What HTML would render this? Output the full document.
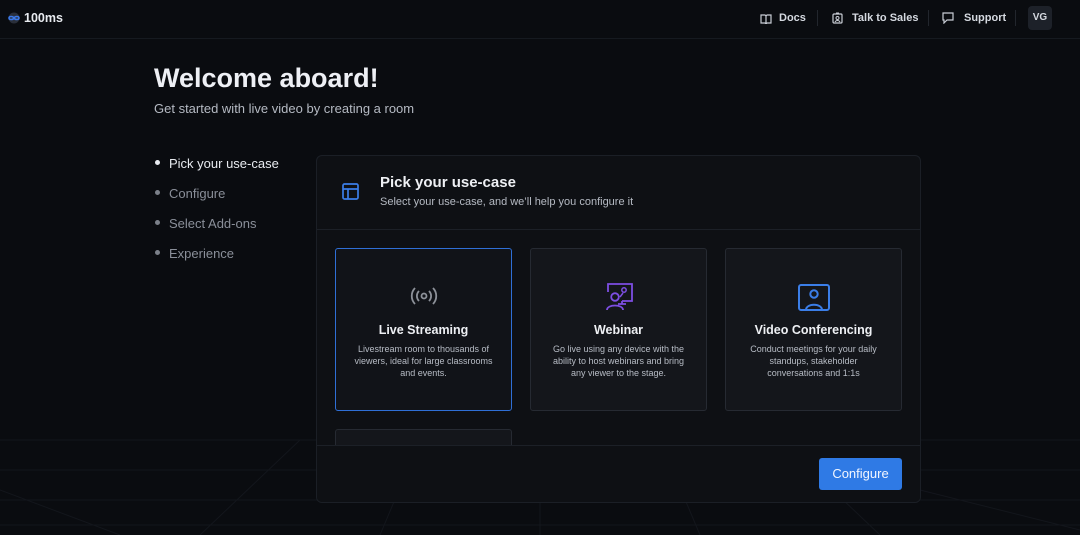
<!DOCTYPE html>
<html><head><meta charset="utf-8"><style>
*{margin:0;padding:0;box-sizing:border-box}
body{width:1080px;height:535px;overflow:hidden;background:#0a0c10;font-family:"Liberation Sans",sans-serif;color:#e6e9ef;position:relative}
.top{position:absolute;left:0;top:0;width:1080px;height:39px;border-bottom:1px solid #161a20}
.abs{position:absolute}
.nav{font-size:11px;font-weight:bold;color:#d5d9e0;display:flex;align-items:center;height:16px;line-height:16px}
.nav span{display:block;line-height:16px}
.sep{position:absolute;top:10px;width:1px;height:16px;background:#22262d}
.panel{position:absolute;left:316px;top:155px;width:605px;height:348px;background:#0e1014;border:1px solid #1b1f26;border-radius:6px;overflow:hidden}
.card{position:absolute;width:177px;height:163px;background:#14161b;border:1px solid #262a32;border-radius:3px;text-align:center}
.card h3{position:absolute;top:74px;width:100%;font-size:12.5px;color:#eef0f4}
.card p{position:absolute;top:94px;left:15px;right:15px;font-size:9px;line-height:12px;color:#b7bcc5}
.card svg{position:absolute;top:34px}
.step{position:absolute;left:155px;font-size:13px;color:#8a8f99}
.step:before{content:"";display:inline-block;width:5px;height:5px;border-radius:50%;background:#7c818a;margin-right:9px;vertical-align:middle;position:relative;top:-2px}
.step.on{color:#e8ebf0}.step.on:before{background:#e8ebf0}
</style></head><body>
<svg class="abs" style="left:0;top:290px" width="1080" height="245"><g stroke="#13161c" stroke-width="1" fill="none">
<line x1="0" y1="150" x2="1080" y2="150"/><line x1="0" y1="180" x2="1080" y2="180"/><line x1="0" y1="210" x2="1080" y2="210"/><line x1="0" y1="235" x2="1080" y2="235"/>
<line x1="540" y1="150" x2="540" y2="245"/><line x1="420" y1="150" x2="380" y2="245"/><line x1="660" y1="150" x2="700" y2="245"/><line x1="300" y1="150" x2="200" y2="245"/><line x1="780" y1="150" x2="880" y2="245"/><line x1="920" y1="200" x2="1080" y2="240"/><line x1="0" y1="200" x2="120" y2="245"/></g></svg>
<div class="top"></div>
<svg class="abs" style="left:7px;top:12px" width="14" height="12"><circle cx="7" cy="6" r="5.5" fill="#2a2f3a"/><path d="M2 6c0-2 4-2 5 0s5 2 5 0-4-2-5 0-5 2-5 0z" stroke="#3b78e7" stroke-width="1.6" fill="none"/></svg>
<div class="abs" style="left:24px;top:11px;font-size:12.5px;font-weight:bold;color:#e8ebf0">100ms</div>
<div class="abs nav" style="left:760px;top:10px"><svg width="12" height="11"><path d="M1 2h4l1 1 1-1h4v8H7l-1 1-1-1H1z M6 3v7" stroke="#c9cdd5" stroke-width="1.2" fill="none"/></svg><span style="margin-left:7px">Docs</span></div>
<div class="sep" style="left:817px"></div>
<div class="abs nav" style="left:832px;top:10px"><svg width="11" height="12"><rect x="1" y="2" width="9" height="9" rx="1" stroke="#c9cdd5" stroke-width="1.2" fill="none"/><circle cx="5.5" cy="6" r="1.5" stroke="#c9cdd5" fill="none"/><path d="M3 10c1-2 4-2 5 0M4 1h3" stroke="#c9cdd5" fill="none"/></svg><span style="margin-left:9px">Talk to Sales</span></div>
<div class="sep" style="left:928px"></div>
<div class="abs nav" style="left:942px;top:10px"><svg width="12" height="12"><path d="M1 1h10v7H5l-3 3V8H1z" stroke="#c9cdd5" stroke-width="1.2" fill="none"/></svg><span style="margin-left:10px">Support</span></div>
<div class="sep" style="left:1015px"></div>
<div class="abs" style="left:1028px;top:6px;width:24px;height:24px;background:#1d2129;border-radius:4px;font-size:10px;font-weight:bold;text-align:center;line-height:24px;color:#d5d9e0">VG</div>

<div class="abs" style="left:154px;top:63px;font-size:27px;font-weight:bold;color:#eef0f5">Welcome aboard!</div>
<div class="abs" style="left:154px;top:101px;font-size:13px;color:#b5bac3">Get started with live video by creating a room</div>
<div class="step on" style="top:156px">Pick your use-case</div>
<div class="step" style="top:186px">Configure</div>
<div class="step" style="top:216px">Select Add-ons</div>
<div class="step" style="top:246px">Experience</div>

<div class="panel">
 <svg class="abs" style="left:25px;top:27px" width="17" height="17"><rect x="1" y="1" width="15" height="15" rx="1.5" stroke="#3b7ee8" stroke-width="1.7" fill="none"/><path d="M1 6h15M6 6V16" stroke="#3b7ee8" stroke-width="1.7"/></svg>
 <div class="abs" style="left:63px;top:18px;font-size:15px;font-weight:bold;color:#eef0f4">Pick your use-case</div>
 <div class="abs" style="left:63px;top:40px;font-size:11px;color:#b5bac3">Select your use-case, and we’ll help you configure it</div>
 <div class="abs" style="left:0;top:73px;width:605px;height:1px;background:#1c2027"></div>
 <div class="card" style="left:18px;top:92px;border:1.5px solid #2f6fd6;background:#111318">
  <svg width="30" height="20" style="left:73px;top:37px"><circle cx="15" cy="10" r="2.5" stroke="#8d9199" stroke-width="1.8" fill="none"/><path d="M10 5a7 7 0 0 0 0 10M20 5a7 7 0 0 1 0 10M6 2a11.5 11.5 0 0 0 0 16M24 2a11.5 11.5 0 0 1 0 16" stroke="#8d9199" stroke-width="1.8" fill="none"/></svg>
  <h3>Live Streaming</h3><p>Livestream room to thousands of viewers, ideal for large classrooms and events.</p></div>
 <div class="card" style="left:213px;top:92px">
  <svg width="30" height="29" style="left:73px;top:33px"><path d="M4 10V2h24v17h-10M18 19v3M14 22h8" stroke="#7d4ee3" stroke-width="1.8" fill="none"/><circle cx="11" cy="15" r="3.8" stroke="#7d4ee3" stroke-width="1.8" fill="none"/><path d="M3 28c0-6 16-6 16 0" stroke="#7d4ee3" stroke-width="1.8" fill="none"/><circle cx="20" cy="8" r="2.2" stroke="#7d4ee3" stroke-width="1.5" fill="none"/><path d="M16 15l3-4" stroke="#7d4ee3" stroke-width="1.5"/></svg>
  <h3>Webinar</h3><p>Go live using any device with the ability to host webinars and bring any viewer to the stage.</p></div>
 <div class="card" style="left:408px;top:92px">
  <svg width="32" height="27" style="left:72px;top:35px"><rect x="1" y="1" width="30" height="25" rx="2" stroke="#3b7ee8" stroke-width="2" fill="none"/><circle cx="16" cy="10" r="3.7" stroke="#3b7ee8" stroke-width="2" fill="none"/><path d="M8 26c0-7 16-7 16 0" stroke="#3b7ee8" stroke-width="2" fill="none"/></svg>
  <h3>Video Conferencing</h3><p>Conduct meetings for your daily standups, stakeholder conversations and 1:1s</p></div>
 <div class="card" style="left:18px;top:273px"></div>
 <div class="abs" style="left:0;top:289px;width:605px;height:60px;background:#0e1014;border-top:1px solid #1c2027"></div>
 <div class="abs" style="left:502px;top:302px;width:83px;height:32px;background:#2f7ae5;border-radius:3px;font-size:13px;color:#f2f6ff;text-align:center;line-height:32px">Configure</div>
</div>
</body></html>
